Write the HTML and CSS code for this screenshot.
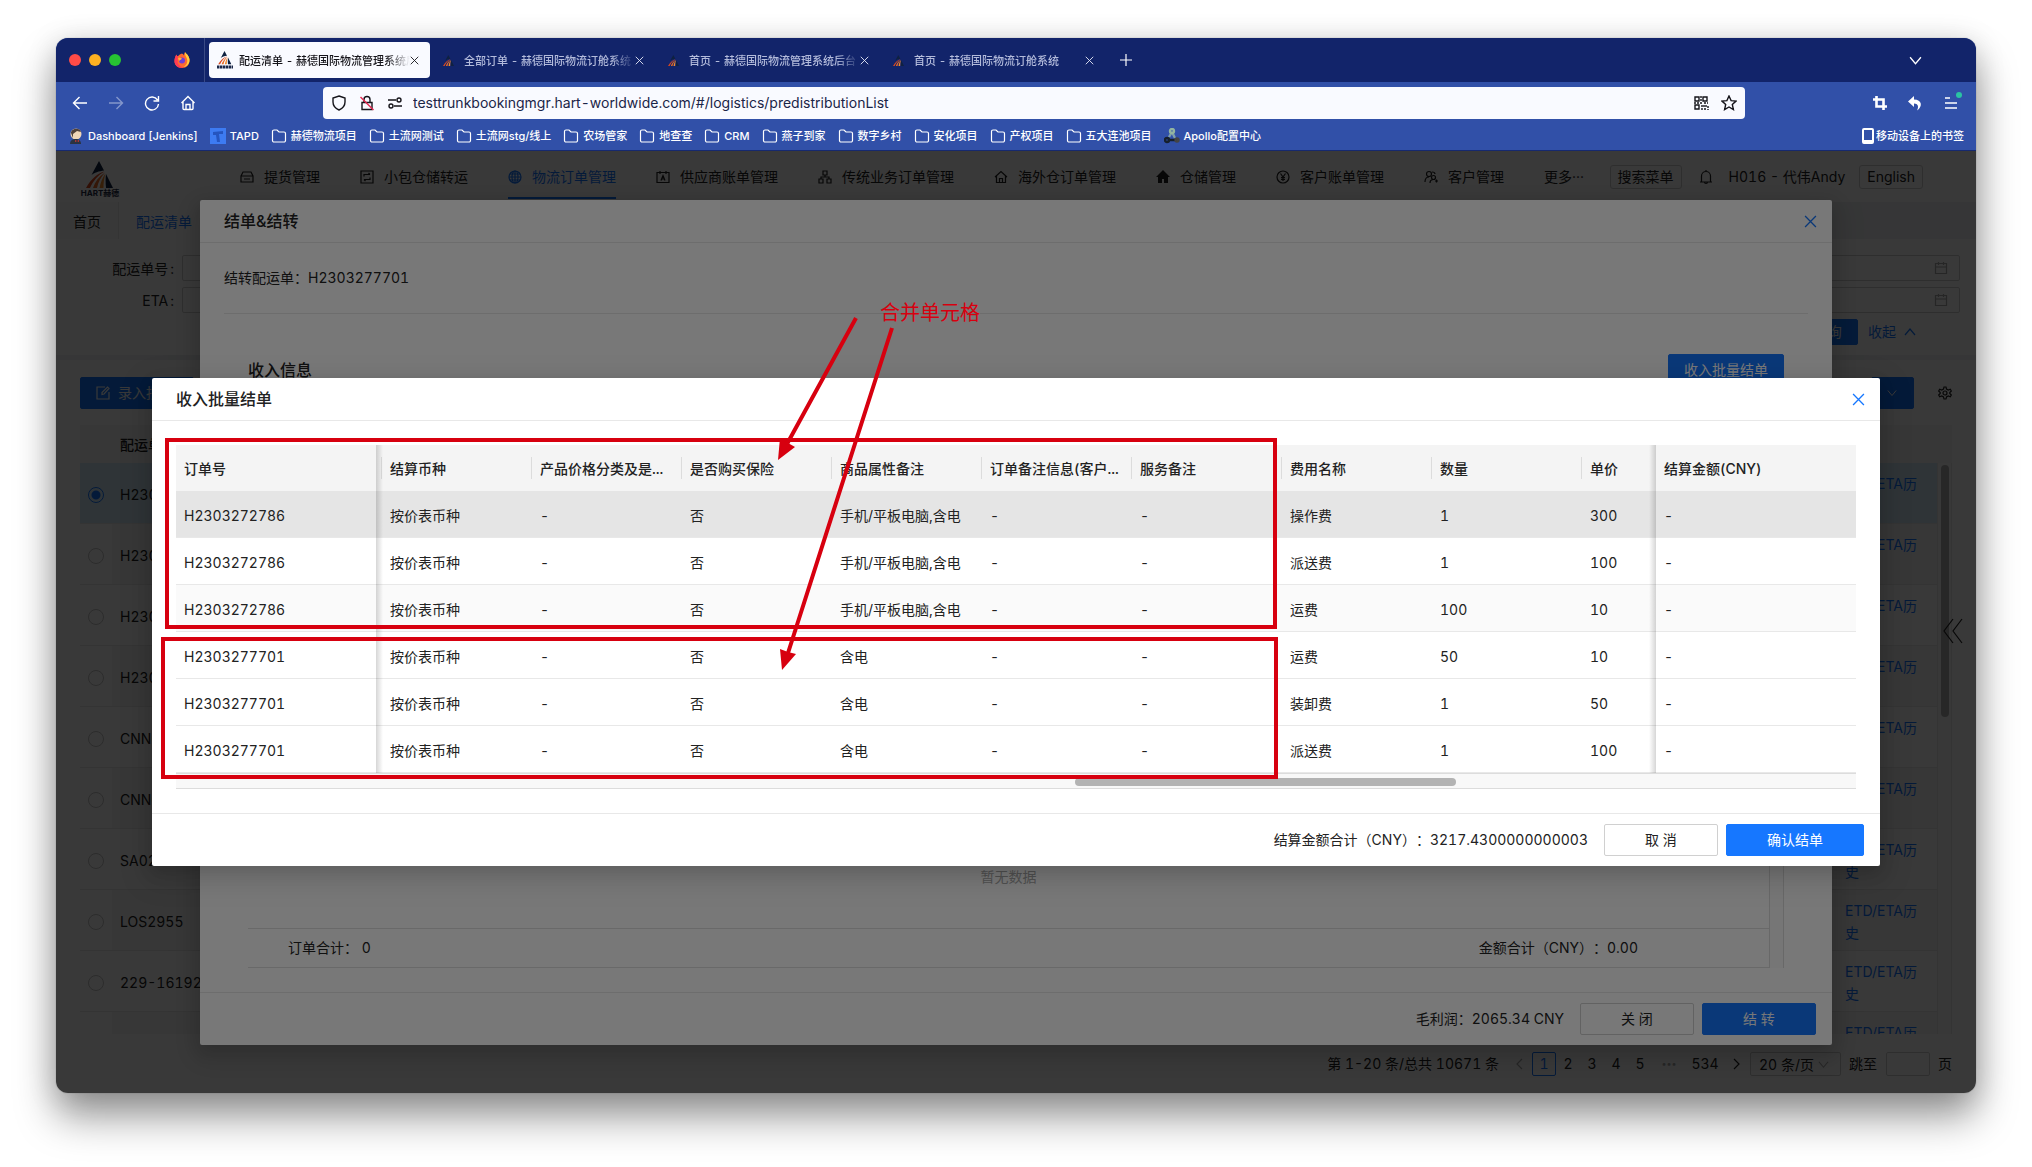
FILE: index.html
```html
<!DOCTYPE html>
<html lang="zh-CN">
<head>
<meta charset="utf-8">
<title>配运清单 - 赫德国际物流管理系统</title>
<link rel="stylesheet" href="styles.css">
</head>
<body>
<svg class="sprite" aria-hidden="true">
  <defs>
    <symbol id="i-x" viewBox="0 0 12 12"><path d="M1 1l10 10M11 1L1 11"/></symbol>
    <symbol id="i-down" viewBox="0 0 12 12"><path d="M1 3l5 6 5-6"/></symbol>
    <symbol id="i-up" viewBox="0 0 12 12"><path d="M1 9l5-6 5 6"/></symbol>
    <symbol id="i-left" viewBox="0 0 12 12"><path d="M8 1L3 6l5 5"/></symbol>
    <symbol id="i-right" viewBox="0 0 12 12"><path d="M4 1l5 5-5 5"/></symbol>
    <symbol id="i-folder" viewBox="0 0 16 16"><path d="M1.500 3.500a1.500 1.500 0 0 1 1.500-1.500h3l2 2h5a1.500 1.500 0 0 1 1.500 1.500v7a1.500 1.500 0 0 1-1.500 1.500H3a1.500 1.500 0 0 1-1.500-1.500z"/></symbol>
    <symbol id="i-cal" viewBox="0 0 14 14"><path d="M1.500 2.500h11v10h-11zM1.500 6h11M4.500 1v3M9.500 1v3"/></symbol>
    <symbol id="i-home" viewBox="0 0 14 14"><path d="M1 7l6-5.500L13 7M2.500 6v6.500h9V6M5.500 12.500V8.500h3v4"/></symbol>
    <symbol id="i-hart" viewBox="0 0 27 27">
      <path fill="#0f2140" d="M13 0l5 9.500C13 10 8 12 5.500 14z"/>
      <path fill="#0f2140" d="M20 13l7 14h-7c-.5-5-.5-10 0-14z"/>
      <path fill="#d9481f" d="M18.500 10.500C12 12 5 18 0 27h4C7 20 12 14 18.500 10.500z"/>
      <path fill="#ea6a24" d="M19 11.500c-6 4-10 9-12 15.500h4c1-6 4-11 8-15.500z"/>
      <path fill="#f28a2c" d="M19.500 12.500c-3 4-5 9-6 14.500h4c0-5 .5-10 2-14.500z"/>
    </symbol>
  </defs>
</svg>

<main class="window">
  <header class="chrome">
    <div class="tabbar">
      <div class="lights"><i class="red"></i><i class="yellow"></i><i class="green"></i></div>
      <svg class="firefox" viewBox="0 0 16 16"><path d="M8 1.500c1 .5 1.500 1 2 2 0-1.500.5-2.500 1-3.500 1 2 4 3 4.500 7.500C16 12.500 12.500 16 8 16S.5 13 .5 9c0-3 1-5 2-6.500 0 1 .5 1.500 1.500 1.700C5 2.500 6.500 2 8 1.500z" fill="#ff6a30"/><path d="M11 0c1 2 4 3 4.500 7.500.3 4-2.500 7-6 7.500 3-1.500 4.500-4.500 3.500-8-.5-2-2.500-4-2-7z" fill="#ffd23c"/><path d="M.5 9c0-3 1-5 2-6.500 0 1 .5 1.500 1.500 1.700C3.500 6 4 8 3.500 10c.5 3 3 4.500 6 5.500-5 1.500-9-2-9-6.500z" fill="#ff3a55"/><circle cx="8" cy="8.500" r="3" fill="#6f3fd6"/><path d="M4 6c2-.5 3 0 4 .5C7 8 5.500 8 5 9z" fill="#ffb13c"/></svg>
      <nav class="tabs">
        <a class="tab active" href="#t1"><svg class="fav" viewBox="0 0 32 36"><use href="#i-hart" x="2" width="27" height="27"/><path d="M0 32h32" stroke="#1b2748" stroke-width="6" stroke-dasharray="5 1"/></svg><span class="tab-title">配运清单 - 赫德国际物流管理系统后台</span><svg class="ic x"><use href="#i-x"/></svg></a>
        <a class="tab" href="#t2"><svg class="fav" viewBox="0 0 27 27"><use href="#i-hart"/></svg><span class="tab-title">全部订单 - 赫德国际物流订舱系统</span><svg class="ic x"><use href="#i-x"/></svg></a>
        <a class="tab" href="#t3"><svg class="fav" viewBox="0 0 27 27"><use href="#i-hart"/></svg><span class="tab-title">首页 - 赫德国际物流管理系统后台</span><svg class="ic x"><use href="#i-x"/></svg></a>
        <a class="tab" href="#t4"><svg class="fav" viewBox="0 0 27 27"><use href="#i-hart"/></svg><span class="tab-title">首页 - 赫德国际物流订舱系统</span><svg class="ic x"><use href="#i-x"/></svg></a>
      </nav>
      <button class="bare newtab" aria-label="新建标签页"><svg class="ic" viewBox="0 0 12 12"><path d="M6 0v12M0 6h12"/></svg></button>
      <button class="bare alltabs" aria-label="所有标签页"><svg class="ic"><use href="#i-down"/></svg></button>
    </div>
    <div class="toolbar">
      <div class="navbtns">
        <button class="bare" aria-label="后退"><svg class="ic" viewBox="0 0 16 16"><path d="M15 8H1.500M7.500 2l-6 6 6 6"/></svg></button>
        <button class="bare faded" aria-label="前进"><svg class="ic" viewBox="0 0 16 16"><path d="M1 8h13.500M8.500 2l6 6-6 6"/></svg></button>
        <button class="bare" aria-label="刷新"><svg class="ic" viewBox="0 0 16 16"><path d="M13.500 5A6.500 6.500 0 1 0 14.500 9M14.500 1v5h-5"/></svg></button>
        <button class="bare" aria-label="主页"><svg class="ic" viewBox="0 0 16 16"><path d="M1.500 8L8 1.500 14.500 8M3 7v6.500a1 1 0 0 0 1 1h8a1 1 0 0 0 1-1V7M6 14V9.500h4V14"/></svg></button>
      </div>
      <div class="urlbar">
        <svg class="ic" viewBox="0 0 16 16"><path d="M8 1l6 2v4c0 4-2.500 6.500-6 8-3.500-1.500-6-4-6-8V3z"/></svg>
        <svg class="ic" viewBox="0 0 16 16"><path d="M3 7.500h10v7H3zM5 7V4.500a3 3 0 0 1 6 0V7"/><path class="strike" d="M1.500 2l13 13"/></svg>
        <svg class="ic" viewBox="0 0 16 16"><path d="M1 5h8M7 11h8"/><circle cx="12" cy="5" r="2"/><circle cx="4" cy="11" r="2"/></svg>
        <input class="url" aria-label="地址" value="testtrunkbookingmgr.hart-worldwide.com/#/logistics/predistributionList">
        <svg class="ic" viewBox="0 0 16 16"><path d="M2 2h4v4H2zM10 2h4v4h-4zM2 10h4v4H2z"/><path d="M8 1v6M1 8h8M11 8h4M9 10v5M11 10v2M13 10v2M15 11v4M11 14h3" stroke-dasharray="2 1"/></svg>
        <svg class="ic" viewBox="0 0 16 16"><path d="M8 1l2.100 4.600 4.900.5-3.700 3.400 1.100 5L8 12l-4.400 2.500 1.100-5L1 6.100l4.900-.5z"/></svg>
      </div>
      <div class="tools">
        <button class="bare" aria-label="截图"><svg class="ic thick" viewBox="0 0 16 16"><path d="M4 0v12h12M0 4h12v12"/></svg></button>
        <button class="bare" aria-label="撤销"><svg class="ic solid" viewBox="0 0 16 16"><path d="M7 1L1 6.500 7 12V8.500c4 0 5 3 3 7 6-4 5-11-3-11z"/></svg></button>
        <button class="bare menu" aria-label="菜单"><svg class="ic" viewBox="0 0 16 16"><path d="M2 3h5M2 8h12M2 13h12"/></svg><i class="dot"></i></button>
      </div>
    </div>
    <nav class="bookmarks">
      <a href="#b"><svg viewBox="0 0 16 16"><circle cx="8" cy="6" r="5.500" fill="#f0d6b7"/><path d="M3 5c0-5 9-6 10-1l-4-1-4 3v4z" fill="#50413a"/><path d="M2 16c0-4 3-5 6-5s5 2 5 5z" fill="#2b3340"/><path d="M7 12l2 1 2-1v2l-2-1-2 1z" fill="#d33833"/></svg>Dashboard [Jenkins]</a>
      <a href="#b"><svg viewBox="0 0 16 16"><path d="M0 0h16v16H0z" fill="#3d7bf2"/><path d="M3 4l10-1v3H9l1 8H7L6 7H3z" fill="#2555c0"/></svg>TAPD</a>
      <a href="#b"><svg class="ic"><use href="#i-folder"/></svg>赫德物流项目</a>
      <a href="#b"><svg class="ic"><use href="#i-folder"/></svg>土流网测试</a>
      <a href="#b"><svg class="ic"><use href="#i-folder"/></svg>土流网stg/线上</a>
      <a href="#b"><svg class="ic"><use href="#i-folder"/></svg>农场管家</a>
      <a href="#b"><svg class="ic"><use href="#i-folder"/></svg>地查查</a>
      <a href="#b"><svg class="ic"><use href="#i-folder"/></svg>CRM</a>
      <a href="#b"><svg class="ic"><use href="#i-folder"/></svg>燕子到家</a>
      <a href="#b"><svg class="ic"><use href="#i-folder"/></svg>数字乡村</a>
      <a href="#b"><svg class="ic"><use href="#i-folder"/></svg>安化项目</a>
      <a href="#b"><svg class="ic"><use href="#i-folder"/></svg>产权项目</a>
      <a href="#b"><svg class="ic"><use href="#i-folder"/></svg>五大连池项目</a>
      <a href="#b"><svg viewBox="0 0 16 16" fill="none" stroke-width="2.400"><path d="M5 9L8 4M8 4l3 6" stroke="#7fa0a8"/><circle cx="8" cy="3" r="2" stroke="#93b5a0"/><circle cx="3" cy="12" r="2" stroke="#16202c"/><path d="M5 12h8" stroke="#16202c"/><circle cx="13" cy="12" r="1.500" stroke="#444"/></svg>Apollo配置中心</a>
      <a class="mobile" href="#b"><svg viewBox="0 0 12 16"><path d="M1 2a1 1 0 0 1 1-1h8a1 1 0 0 1 1 1v12a1 1 0 0 1-1 1H2a1 1 0 0 1-1-1zM1 13h10" fill="none" stroke="#fff" stroke-width="2"/></svg>移动设备上的书签</a>
    </nav>
  </header>

  <section class="app">
    <div class="topnav">
      <svg class="logo" viewBox="0 0 40 36"><use href="#i-hart" x="6" width="27" height="27"/><text x="20" y="35" text-anchor="middle">HART赫德</text></svg>
      <nav class="menu-main">
        <a href="#m"><svg class="ic" viewBox="0 0 14 14"><path d="M1 6l2-4h8l2 4v6H1zM1 6h12M4 9h6"/></svg>提货管理</a>
        <a href="#m"><svg class="ic" viewBox="0 0 14 14"><path d="M1 1h12v12H1zM4 6.500V4.500h6M8.500 3L10 4.500M10 7.500v2H4M5.500 11L4 9.500"/></svg>小包仓储转运</a>
        <a class="on" href="#m"><svg class="ic" viewBox="0 0 14 14"><circle cx="7" cy="7" r="6"/><ellipse cx="7" cy="7" rx="3" ry="6"/><path d="M1 7h12M7 1v12M2 4h10M2 10h10"/></svg>物流订单管理</a>
        <a href="#m"><svg class="ic" viewBox="0 0 14 14"><path d="M1 2.500h12v10H1zM4 1v3M10 1v3M5 10.500l2-5 2 5M6 9h2"/></svg>供应商账单管理</a>
        <a href="#m"><svg class="ic" viewBox="0 0 14 14"><path d="M5 1h4v4H5zM1 9h4v4H1zM9 9h4v4H9zM7 5v2M3 9V7h8v2"/></svg>传统业务订单管理</a>
        <a href="#m"><svg class="ic"><use href="#i-home"/></svg>海外仓订单管理</a>
        <a href="#m"><svg class="ic solid" viewBox="0 0 14 14"><path d="M7 0l7 7h-2v6H8V9H6v4H2V7H0z"/></svg>仓储管理</a>
        <a href="#m"><svg class="ic" viewBox="0 0 14 14"><circle cx="7" cy="7" r="6"/><path d="M4.500 3.500L7 7l2.500-3.500M7 7v4M5 7.500h4M5 9.300h4"/></svg>客户账单管理</a>
        <a href="#m"><svg class="ic" viewBox="0 0 14 14"><circle cx="5" cy="4" r="2.500"/><path d="M1 12c0-3 1.500-5 4-5M8 2c2 0 3 1 3 2"/><circle cx="9.500" cy="7.500" r="2"/><path d="M6 13c0-2 1-3.500 3.500-3.500M11 11h3M12.500 9.500v3"/></svg>客户管理</a>
        <a href="#m">更多···</a>
      </nav>
      <div class="user">
        <button class="outline">搜索菜单</button>
        <svg class="ic bell" viewBox="0 0 14 16"><path d="M1 13h12M2.500 13V7a4.500 4.500 0 0 1 9 0v6M5.500 13a1.500 1.500 0 0 0 3 0M7 1v1.500"/></svg>
        <span>H016 - 代伟Andy</span>
        <button class="outline">English</button>
      </div>
    </div>
    <nav class="pagetabs"><a href="#p">首页</a><a class="on" href="#p">配运清单</a></nav>

    <form class="filter">
      <div class="frow"><label for="no">配运单号</label><input id="no"><div class="datebox"><input aria-label="日期"><svg class="ic"><use href="#i-cal"/></svg></div></div>
      <div class="frow"><label for="eta">ETA</label><input id="eta"><div class="datebox"><input aria-label="到港日期"><svg class="ic"><use href="#i-cal"/></svg></div></div>
      <div class="factions"><button type="button" class="btn primary query">查 询</button><a href="#f">收起<svg class="ic"><use href="#i-up"/></svg></a></div>
    </form>

    <div class="listing">
      <div class="actions">
        <button class="btn primary"><svg class="ic" viewBox="0 0 14 14"><path d="M9 1H1v12h12V6M6 8.500V6.500L11.500 1l1.500 1.500L8 8z"/></svg>录入批次</button>
        <span class="spacer"></span>
        <button class="btn primary more" aria-label="更多操作"><svg class="ic"><use href="#i-down"/></svg></button>
        <svg class="ic gear" viewBox="0 0 14 14"><path d="M6 1h2l.5 2 1.800 1 2-.7 1 1.700L11.800 6.500v1l1.500 1.500-1 1.700-2-.7-1.800 1L8 13H6l-.5-2-1.800-1-2 .7-1-1.700 1.500-1.500v-1L.7 5l1-1.700 2 .7 1.800-1z"/><circle cx="7" cy="7" r="2"/></svg>
      </div>
      <div class="grid">
        <table class="orders">
          <colgroup><col class="c-radio"><col><col class="c-link"></colgroup>
          <thead><tr><th></th><th>配运单号</th><th></th></tr></thead>
        </table>
        <div class="scroll">
          <table class="orders">
            <colgroup><col class="c-radio"><col><col class="c-link"></colgroup>
            <tbody>
              <tr class="sel"><td><input type="radio" name="o" checked aria-label="选择"></td><td>H2303277701</td><td><a href="#e">ETD/ETA历史</a></td></tr>
              <tr><td><input type="radio" name="o" aria-label="选择"></td><td>H2303272786</td><td><a href="#e">ETD/ETA历史</a></td></tr>
              <tr><td><input type="radio" name="o" aria-label="选择"></td><td>H2303272785</td><td><a href="#e">ETD/ETA历史</a></td></tr>
              <tr><td><input type="radio" name="o" aria-label="选择"></td><td>H2303272784</td><td><a href="#e">ETD/ETA历史</a></td></tr>
              <tr><td><input type="radio" name="o" aria-label="选择"></td><td>CNN0012</td><td><a href="#e">ETD/ETA历史</a></td></tr>
              <tr><td><input type="radio" name="o" aria-label="选择"></td><td>CNN0011</td><td><a href="#e">ETD/ETA历史</a></td></tr>
              <tr><td><input type="radio" name="o" aria-label="选择"></td><td>SA02</td><td><a href="#e">ETD/ETA历史</a></td></tr>
              <tr><td><input type="radio" name="o" aria-label="选择"></td><td>LOS2955</td><td><a href="#e">ETD/ETA历史</a></td></tr>
              <tr><td><input type="radio" name="o" aria-label="选择"></td><td>229-161926</td><td><a href="#e">ETD/ETA历史</a></td></tr>
              <tr><td></td><td></td><td><a href="#e">ETD/ETA历史</a></td></tr>
            </tbody>
          </table>
          <div class="vbar"><i></i></div>
        </div>
        <svg class="ic collapse" viewBox="0 0 22 26"><path d="M11 1L2 13l9 12M20 1l-9 12 9 12"/></svg>
      </div>
      <div class="pager">
        <span class="total">第 1-20 条/总共 10671 条</span>
        <a class="off" href="#1"><svg class="ic"><use href="#i-left"/></svg></a><a class="cur" href="#1">1</a><a href="#2">2</a><a href="#3">3</a><a href="#4">4</a><a href="#5">5</a><span class="dots">•••</span><a class="wide" href="#534">534</a><a href="#2"><svg class="ic"><use href="#i-right"/></svg></a>
        <div class="size"><select aria-label="每页条数"><option>20 条/页</option></select><svg class="ic"><use href="#i-down"/></svg></div>
        <label for="jump">跳至</label><input id="jump"><span>页</span>
      </div>
    </div>

    <div class="mask first">
      <div class="modal outer" role="dialog" aria-label="结单&amp;结转">
        <div class="mhead"><h2>结单&amp;结转</h2><button class="bare close" aria-label="关闭"><svg class="ic"><use href="#i-x"/></svg></button></div>
        <div class="obody">
          <p class="carry">结转配运单：H2303277701</p>
          <div class="income">
            <div class="ihead"><h3>收入信息</h3><button class="btn primary">收入批量结单</button></div>
            <div class="igrid">
              <div class="imain"><div class="empty">暂无数据</div><div class="sums"><span>订单合计： 0</span><span>金额合计（CNY）：0.00</span></div></div>
              <div class="gutter"></div>
            </div>
          </div>
        </div>
        <div class="mfoot"><span>毛利润：2065.34 CNY</span><button class="btn">关 闭</button><button class="btn primary">结 转</button></div>
      </div>
    </div>

    <div class="mask second">
      <div class="modal inner" role="dialog" aria-label="收入批量结单">
        <div class="mhead"><h2>收入批量结单</h2><button class="bare close" aria-label="关闭"><svg class="ic"><use href="#i-x"/></svg></button></div>
        <div class="ibody">
          <table class="fees">
            <colgroup><col class="w-id"><col class="w-first"><col class="w"><col class="w"><col class="w"><col class="w"><col class="w"><col class="w"><col class="w"><col><col class="w-id"></colgroup>
            <thead><tr><th>订单号</th><th>结算币种</th><th>产品价格分类及是...</th><th>是否购买保险</th><th>商品属性备注</th><th>订单备注信息(客户...</th><th>服务备注</th><th>费用名称</th><th>数量</th><th>单价</th><th>结算金额(CNY)</th></tr></thead>
            <tbody>
              <tr class="hover"><td>H2303272786</td><td>按价表币种</td><td>-</td><td>否</td><td>手机/平板电脑,含电</td><td>-</td><td>-</td><td>操作费</td><td>1</td><td>300</td><td>-</td></tr>
              <tr><td>H2303272786</td><td>按价表币种</td><td>-</td><td>否</td><td>手机/平板电脑,含电</td><td>-</td><td>-</td><td>派送费</td><td>1</td><td>100</td><td>-</td></tr>
              <tr class="alt"><td>H2303272786</td><td>按价表币种</td><td>-</td><td>否</td><td>手机/平板电脑,含电</td><td>-</td><td>-</td><td>运费</td><td>100</td><td>10</td><td>-</td></tr>
              <tr><td>H2303277701</td><td>按价表币种</td><td>-</td><td>否</td><td>含电</td><td>-</td><td>-</td><td>运费</td><td>50</td><td>10</td><td>-</td></tr>
              <tr><td>H2303277701</td><td>按价表币种</td><td>-</td><td>否</td><td>含电</td><td>-</td><td>-</td><td>装卸费</td><td>1</td><td>50</td><td>-</td></tr>
              <tr><td>H2303277701</td><td>按价表币种</td><td>-</td><td>否</td><td>含电</td><td>-</td><td>-</td><td>派送费</td><td>1</td><td>100</td><td>-</td></tr>
            </tbody>
          </table>
          <div class="hbar"><i style="margin-left:53.5%;width:22.7%"></i></div>
        </div>
        <div class="mfoot"><span>结算金额合计（CNY）：3217.4300000000003</span><button class="btn">取 消</button><button class="btn primary confirm">确认结单</button></div>
      </div>
    </div>
  </section>
</main>

<svg class="notes">
  <rect x="167" y="440" width="1108" height="187"/>
  <rect x="163" y="639" width="1113" height="138"/>
  <path d="M856 318L787 444M892 328L788 653"/>
  <path class="head" d="M778 460l2-22 8 5 7 4zM782 670l-2-21 8 3 8 2z"/>
  <text x="880" y="320">合并单元格</text>
</svg>
</body>
</html>
```
FILE: styles.css
```css
* { box-sizing: border-box; }
body {
  margin: 0;
  background: #fff;
  font: 14px/22px Inter, "Noto Sans CJK SC", sans-serif;
  font-variant-numeric: tabular-nums;
  text-spacing-trim: space-all;
  color: #222;
}
a { color: inherit; text-decoration: none; }
button, input, select { font: inherit; color: inherit; }
h2, h3, p { margin: 0; }
.sprite { position: absolute; width: 0; height: 0; }
.ic { flex: none; width: 14px; height: 14px; fill: none; stroke: currentColor; stroke-width: 1.2; }
.ic.solid { fill: currentColor; stroke: none; }
.ic.thick { stroke-width: 3; }
.bare { display: flex; align-items: center; justify-content: center; padding: 0; border: 0; background: none; }
.spacer { flex: 1; }

.window {
  margin: 38px 56px 74px;
  border-radius: 12px;
  overflow: hidden;
  box-shadow: 0 0 1px rgba(0,0,0,.5), 0 24px 40px rgba(0,0,0,.4), 0 4px 30px rgba(0,0,0,.15);
}

/* Browser chrome */
.chrome { background: #3150a8; color: #fff; border-bottom: 1px solid #16296f; }
.tabbar { display: flex; align-items: center; height: 44px; background: #12246a; padding-right: 54px; font-size: 11px; line-height: 16px; }
.lights { display: flex; gap: 8px; padding-left: 13px; }
.lights i { width: 12px; height: 12px; border-radius: 50%; }
.red { background: #ff4b47; }
.yellow { background: #fdb022; }
.green { background: #27c232; }
.firefox { width: 16px; height: 16px; margin-left: 53px; }
.tabs { display: flex; gap: 4px; height: 44px; align-items: center; margin-left: 14px; padding-left: 4px; border-left: 1px solid #3a4a85; }
.tab { display: flex; align-items: center; width: 221px; height: 36px; padding: 0 11px 0 8px; border-radius: 4px; color: #b3bbdb; font-weight: 500; }
.tab.active { background: #f9faff; color: #15141a; }
.fav { flex: none; width: 16px; height: 18px; margin-right: 6px; }
.tab:not(.active) .fav { height: 11px; width: 11px; margin: 0 10px 0 1px; }
.tab-title { flex: 1; padding-top: 1px; overflow: hidden; white-space: nowrap; mask-image: linear-gradient(to right, #000 86%, transparent); }
.tab .x { width: 9px; height: 9px; color: #e6e9f6; }
.tab.active .x { color: #15141a; }
.newtab { margin-left: 15px; }
.newtab .ic { width: 12px; height: 12px; }
.alltabs { margin-left: auto; }
.alltabs .ic { width: 13px; height: 13px; }
.toolbar { display: flex; align-items: center; height: 41px; padding: 0 17px 0 16px; }
.navbtns { display: flex; gap: 20px; width: 251px; flex: none; }
.toolbar .ic { width: 16px; height: 16px; stroke-width: 1.4; }
.toolbar .ic.thick { stroke-width: 3; width: 14px; height: 14px; }
.faded { opacity: .4; }
.urlbar { flex: 1; display: flex; align-items: center; gap: 12px; height: 32px; padding: 0 8px; border-radius: 4px; background: #f9faff; color: #15141a; }
.strike { stroke: #e22850; }
.url { flex: 1; margin-left: -2px; padding: 0; border: 0; background: none; outline: 0; font-size: 14px; color: #1a2547; }
.tools { display: flex; gap: 20px; padding-left: 128px; }
.menu { position: relative; }
.dot { position: absolute; right: -3px; top: -3px; width: 6px; height: 6px; border-radius: 50%; background: #2ac3a2; }
.bookmarks { display: flex; align-items: center; gap: 12px; height: 27px; padding: 0 12px 2px; font-size: 11px; line-height: 16px; font-weight: 500; }
.bookmarks a { display: flex; align-items: center; gap: 4px; white-space: nowrap; }
.bookmarks svg { width: 16px; height: 16px; }
.bookmarks .mobile { margin-left: auto; gap: 2px; }
.bookmarks .mobile svg { width: 12px; }

/* Application page */
.app { position: relative; background: #fff; }
.topnav { display: flex; height: 51px; padding: 4px 53px 0 24px; white-space: nowrap; }
.logo { width: 40px; height: 36px; margin-top: 6px; overflow: visible; }
.logo text { font-size: 8px; font-weight: 700; fill: #222a44; }
.menu-main { display: flex; gap: 40px; margin-left: 120px; }
.menu-main a { display: flex; align-items: center; gap: 10px; height: 44px; padding-top: 1px; border-bottom: 2px solid transparent; }
.menu-main .on { color: #1677ff; border-color: #1677ff; }
.user { display: flex; align-items: center; height: 44px; margin-left: auto; gap: 14px; }
.user .bell { width: 14px; height: 16px; margin: 0 2px 0 3px; }
.outline { height: 24px; padding: 0 7px; border: 1px solid #d0d0d0; border-radius: 3px; background: none; line-height: 20px; }
.pagetabs { display: flex; height: 37px; background: #f0f2f5; }
.pagetabs a { display: flex; align-items: center; padding: 2px 17px 0; background: #fafafa; border-right: 1px solid #e8e8e8; }
.pagetabs .on { color: #1677ff; background: #fff; border: 0; }
.filter { display: flex; flex-direction: column; gap: 6px; padding: 16px 16px 10px; }
.frow { display: flex; height: 26px; }
.frow label { width: 110px; line-height: 28px; text-align: right; }
.frow label::after { content: ":"; margin: 0 8px 0 2px; }
.frow input, .datebox { flex: 1; min-width: 0; border: 1px solid #d0d0d0; border-radius: 2px; background: #fff; }
.datebox { display: flex; align-items: center; margin-left: 120px; padding-right: 11px; color: #aaa; }
.datebox input { border: 0; height: 20px; }
.factions { display: flex; justify-content: flex-end; align-items: center; gap: 10px; padding-right: 44px; color: #1677ff; }
.factions a { display: flex; align-items: center; gap: 8px; }
.factions .ic { width: 12px; height: 12px; }
.btn { height: 32px; min-width: 114px; padding: 0 15px; border: 1px solid #d0d0d0; border-radius: 2px; background: #fff; color: #222; line-height: 20px; }
.btn.primary { border-color: #1677ff; background: #1677ff; color: #fff; }
.btn.query { height: 26px; min-width: 64px; }
.listing { padding: 17px 16px 17px 24px; border-top: 5px solid #f0f2f5; }
.actions { display: flex; align-items: center; padding-right: 8px; }
.actions .btn { display: flex; align-items: center; gap: 8px; }
.actions .more { min-width: 43px; }
.more .ic { width: 10px; height: 10px; }
.gear { margin-left: 24px; }
.grid { position: relative; margin-top: 16px; padding-right: 8px; }
.orders { width: 100%; table-layout: fixed; border-spacing: 0; }
.c-radio { width: 32px; }
.c-link { width: 100px; }
.orders th { height: 38px; padding: 2px 8px 0; background: #f5f5f5; text-align: left; font-weight: 500; }
.orders td { height: 61px; padding: 3px 8px 0; border-bottom: 1px solid #e8e8e8; }
.orders tr:nth-child(even) td + td { background: #f7f7f7; }
.orders .sel td { background: #d3ebf5; }
.orders td a { color: #1677ff; }
.orders input { appearance: none; display: block; width: 16px; height: 16px; margin: 0; border: 1px solid #c4c4c4; border-radius: 50%; }
.orders input:checked { border: 1px solid #1677ff; background: radial-gradient(#1677ff 4px, transparent 5px); }
.scroll { display: flex; height: 571px; overflow: hidden; }
.vbar { flex: none; width: 15px; height: 571px; padding: 2px 3px; border: solid #e8e8e8; border-width: 0 1px; background: #fafafa; }
.vbar i { display: block; width: 8px; height: 252px; border-radius: 4px; background: #b0b0b0; }
.collapse { position: absolute; right: -4px; top: 193px; width: 22px; height: 26px; }
.pager { display: flex; align-items: center; height: 24px; margin-top: 18px; padding-right: 8px; justify-content: flex-end; white-space: nowrap; }
.pager a { display: flex; align-items: center; justify-content: center; width: 24px; height: 24px; border: 1px solid transparent; border-radius: 2px; }
.pager a .ic { width: 12px; height: 12px; }
.pager .total { margin-right: 9px; }
.pager .off, .dots { color: #aaa; }
.pager .cur { color: #1677ff; border-color: #1677ff; }
.pager .dots { width: 34px; text-align: center; font-size: 9px; }
.pager .wide { width: 38px; }
.size { display: flex; align-items: center; width: 91px; height: 24px; margin: 0 8px 0 2px; padding: 0 11px 0 8px; border: 1px solid #d0d0d0; border-radius: 2px; }
.size select { flex: 1; min-width: 0; height: 20px; padding: 0; appearance: none; border: 0; background: none; }
.size .ic { width: 11px; height: 11px; color: #aaa; }
.pager input { width: 44px; height: 24px; margin: 0 8px 0 9px; border: 1px solid #d0d0d0; border-radius: 2px; background: none; }

/* Dialogs */
.mask { position: absolute; inset: 0; display: flex; justify-content: center; align-items: flex-start; }
.first { padding-top: 49px; background: rgba(0,0,0,.52); }
.second { padding-top: 227px; background: rgba(0,0,0,.53); }
.modal { border-radius: 2px; background: #fff; box-shadow: 0 6px 16px rgba(0,0,0,.12), 0 9px 28px 8px rgba(0,0,0,.1); }
.outer { width: 85%; }
.inner { width: 90%; }
.mhead { display: flex; align-items: center; justify-content: space-between; height: 43px; padding: 0 15px 0 24px; border-bottom: 1px solid #e8e8e8; }
.mhead h2, .ihead h3 { font-size: 16px; line-height: 22px; font-weight: 500; }
.close { color: #1677ff; }
.close .ic { width: 13px; height: 13px; }
.mfoot { display: flex; align-items: center; justify-content: flex-end; gap: 8px; height: 53px; padding: 0 16px; border-top: 1px solid #e8e8e8; }
.mfoot span { margin-right: 8px; }
.mfoot .confirm { min-width: 138px; }
.obody { padding: 24px; }
.carry { height: 47px; border-bottom: 1px solid #e8e8e8; }
.income { padding: 40px 24px 0; }
.ihead { display: flex; align-items: center; justify-content: space-between; }
.igrid { display: flex; }
.imain { flex: 1; }
.gutter { width: 15px; border: solid #dedede; border-width: 0 1px; background: #fafafa; }
.empty { display: flex; align-items: flex-end; justify-content: center; height: 542px; padding-bottom: 40px; color: #aaa; }
.sums { display: flex; align-items: center; justify-content: space-between; height: 40px; padding: 0 131px 0 40px; border: solid #e0e0e0; border-width: 1px 0; }

.ibody { padding: 24px; }
.fees { width: 100%; table-layout: fixed; border-spacing: 0; color: #222; white-space: nowrap; }
.w-id { width: 200px; }
.w-first { width: 156px; }
.w { width: 150px; }
.fees th { height: 46px; padding: 2px 8px 0; text-align: left; font-weight: 500; background: #f4f4f4 linear-gradient(#dcdcdc, #dcdcdc) no-repeat right center / 1px 22px; }
.fees td { height: 47px; padding: 3px 8px 0; border-bottom: 1px solid #e8e8e8; }
.fees th:nth-child(2), .fees td:nth-child(2) { padding-left: 14px; }
.fees th:first-child, .fees th:nth-last-child(-n+2) { background-image: none; }
.fees tr > :first-child, .fees tr > :last-child { position: relative; }
.fees td:first-child, .fees td:last-child { background: #fff; }
.fees tr > :first-child::after, .fees tr > :last-child::before { content: ""; position: absolute; top: 0; bottom: -1px; width: 7px; }
.fees tr > :first-child::after { left: 100%; background: linear-gradient(to right, rgba(0,0,0,.16), transparent); }
.fees tr > :last-child::before { right: 100%; background: linear-gradient(to left, rgba(0,0,0,.16), transparent); }
.fees thead tr > :first-child::after, .fees thead tr > :last-child::before { bottom: 0; }
.fees th:first-child::before { content: ""; position: absolute; left: 205px; top: 12px; width: 1px; height: 22px; background: #dcdcdc; }
.fees .hover td { background: #e5e5e5; }
.fees .alt td { background: #fafafa; }
.hbar { height: 16px; padding-top: 4px; border: solid #dcdcdc; border-width: 1px 0; background: #f8f8f8; }
.hbar i { display: block; height: 8px; border-radius: 4px; background: #b3b3b3; }

/* Red review marks drawn over the page */
.notes { position: absolute; left: 0; top: 0; width: 100%; height: 1167px; fill: none; stroke: #d7000f; stroke-width: 4; pointer-events: none; }
.notes .head { fill: #d7000f; stroke: none; }
.notes text { font-size: 20px; fill: #d7000f; stroke: none; }
```
